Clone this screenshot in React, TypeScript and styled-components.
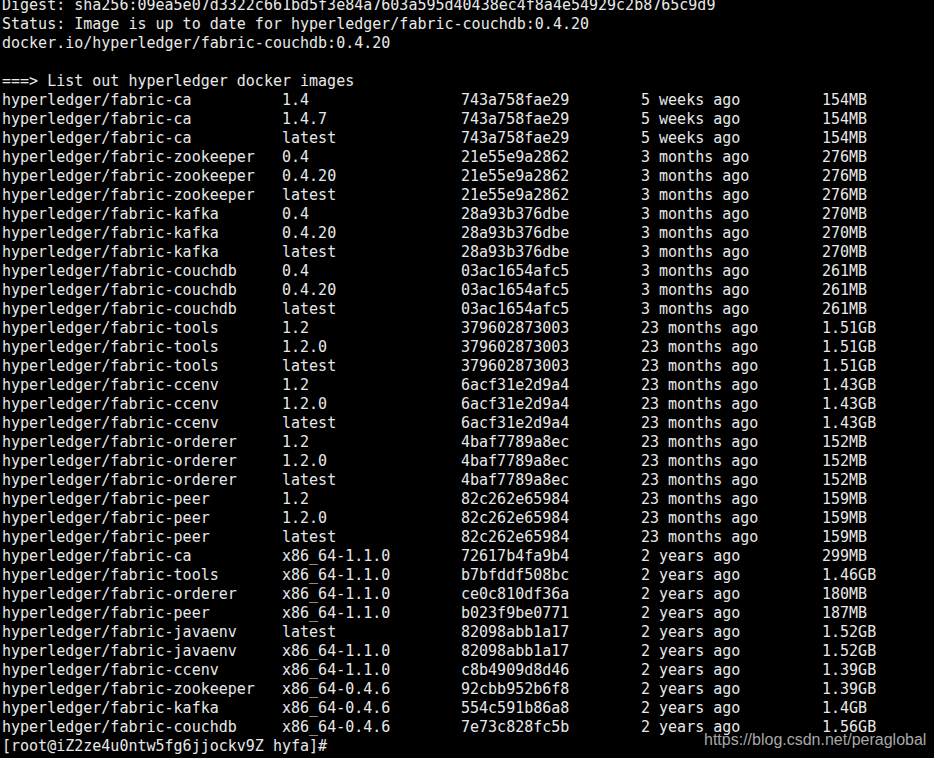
import React from "react";
import styled, { createGlobalStyle } from "styled-components";

const Global = createGlobalStyle`
  html, body {
    margin: 0;
    padding: 0;
    background: #000;
    overflow: hidden;
  }
`;

const Screen = styled.div`
  position: relative;
  width: 934px;
  height: 758px;
  background: #000;
  overflow: hidden;
`;

const Terminal = styled.div`
  margin-top: -4px;
  padding-left: 2px;
  font-family: "DejaVu Sans Mono", "Liberation Mono", monospace;
  font-size: 15px;
  line-height: 19px;
  color: #e8e8e8;
  white-space: pre;
`;

const Line = styled.div`
  height: 19px;
`;

const ImageRow = styled.div`
  display: grid;
  grid-template-columns: 280px 179px 180px 181px auto;
  height: 19px;
`;

const Cell = styled.span`
  white-space: pre;
`;

const Watermark = styled.div`
  position: absolute;
  left: 704px;
  top: 730px;
  font-family: "Liberation Sans", Arial, sans-serif;
  font-size: 16px;
  line-height: 19px;
  color: rgba(200, 200, 200, 0.85);
  white-space: nowrap;
`;

type Img = [string, string, string, string, string];

const images: Img[] = [
  ["hyperledger/fabric-ca", "1.4", "743a758fae29", "5 weeks ago", "154MB"],
  ["hyperledger/fabric-ca", "1.4.7", "743a758fae29", "5 weeks ago", "154MB"],
  ["hyperledger/fabric-ca", "latest", "743a758fae29", "5 weeks ago", "154MB"],
  ["hyperledger/fabric-zookeeper", "0.4", "21e55e9a2862", "3 months ago", "276MB"],
  ["hyperledger/fabric-zookeeper", "0.4.20", "21e55e9a2862", "3 months ago", "276MB"],
  ["hyperledger/fabric-zookeeper", "latest", "21e55e9a2862", "3 months ago", "276MB"],
  ["hyperledger/fabric-kafka", "0.4", "28a93b376dbe", "3 months ago", "270MB"],
  ["hyperledger/fabric-kafka", "0.4.20", "28a93b376dbe", "3 months ago", "270MB"],
  ["hyperledger/fabric-kafka", "latest", "28a93b376dbe", "3 months ago", "270MB"],
  ["hyperledger/fabric-couchdb", "0.4", "03ac1654afc5", "3 months ago", "261MB"],
  ["hyperledger/fabric-couchdb", "0.4.20", "03ac1654afc5", "3 months ago", "261MB"],
  ["hyperledger/fabric-couchdb", "latest", "03ac1654afc5", "3 months ago", "261MB"],
  ["hyperledger/fabric-tools", "1.2", "379602873003", "23 months ago", "1.51GB"],
  ["hyperledger/fabric-tools", "1.2.0", "379602873003", "23 months ago", "1.51GB"],
  ["hyperledger/fabric-tools", "latest", "379602873003", "23 months ago", "1.51GB"],
  ["hyperledger/fabric-ccenv", "1.2", "6acf31e2d9a4", "23 months ago", "1.43GB"],
  ["hyperledger/fabric-ccenv", "1.2.0", "6acf31e2d9a4", "23 months ago", "1.43GB"],
  ["hyperledger/fabric-ccenv", "latest", "6acf31e2d9a4", "23 months ago", "1.43GB"],
  ["hyperledger/fabric-orderer", "1.2", "4baf7789a8ec", "23 months ago", "152MB"],
  ["hyperledger/fabric-orderer", "1.2.0", "4baf7789a8ec", "23 months ago", "152MB"],
  ["hyperledger/fabric-orderer", "latest", "4baf7789a8ec", "23 months ago", "152MB"],
  ["hyperledger/fabric-peer", "1.2", "82c262e65984", "23 months ago", "159MB"],
  ["hyperledger/fabric-peer", "1.2.0", "82c262e65984", "23 months ago", "159MB"],
  ["hyperledger/fabric-peer", "latest", "82c262e65984", "23 months ago", "159MB"],
  ["hyperledger/fabric-ca", "x86_64-1.1.0", "72617b4fa9b4", "2 years ago", "299MB"],
  ["hyperledger/fabric-tools", "x86_64-1.1.0", "b7bfddf508bc", "2 years ago", "1.46GB"],
  ["hyperledger/fabric-orderer", "x86_64-1.1.0", "ce0c810df36a", "2 years ago", "180MB"],
  ["hyperledger/fabric-peer", "x86_64-1.1.0", "b023f9be0771", "2 years ago", "187MB"],
  ["hyperledger/fabric-javaenv", "latest", "82098abb1a17", "2 years ago", "1.52GB"],
  ["hyperledger/fabric-javaenv", "x86_64-1.1.0", "82098abb1a17", "2 years ago", "1.52GB"],
  ["hyperledger/fabric-ccenv", "x86_64-1.1.0", "c8b4909d8d46", "2 years ago", "1.39GB"],
  ["hyperledger/fabric-zookeeper", "x86_64-0.4.6", "92cbb952b6f8", "2 years ago", "1.39GB"],
  ["hyperledger/fabric-kafka", "x86_64-0.4.6", "554c591b86a8", "2 years ago", "1.4GB"],
  ["hyperledger/fabric-couchdb", "x86_64-0.4.6", "7e73c828fc5b", "2 years ago", "1.56GB"],
];

export default function App() {
  return (
    <Screen>
      <Global />
      <Terminal>
        <Line>Digest: sha256:09ea5e07d3322c661bd5f3e84a7603a595d40438ec4f8a4e54929c2b8765c9d9</Line>
        <Line>Status: Image is up to date for hyperledger/fabric-couchdb:0.4.20</Line>
        <Line>docker.io/hyperledger/fabric-couchdb:0.4.20</Line>
        <Line> </Line>
        <Line>===&gt; List out hyperledger docker images</Line>
        {images.map((row, i) => (
          <ImageRow key={i}>
            {row.map((c, j) => (
              <Cell key={j}>{c}</Cell>
            ))}
          </ImageRow>
        ))}
        <Line>[root@iZ2ze4u0ntw5fg6jjockv9Z hyfa]#</Line>
      </Terminal>
      <Watermark>https://blog.csdn.net/peraglobal</Watermark>
    </Screen>
  );
}
